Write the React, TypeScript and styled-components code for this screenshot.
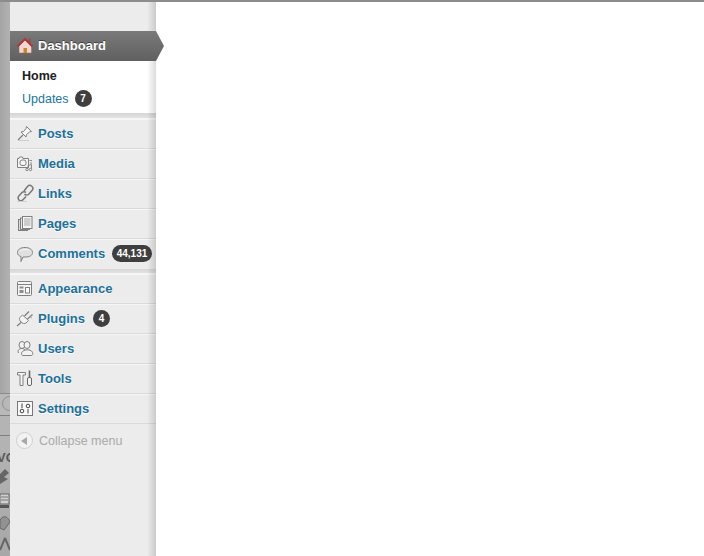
import React from "react";
import styled, { createGlobalStyle } from "styled-components";

const GlobalStyle = createGlobalStyle`
  html, body {
    margin: 0;
    padding: 0;
    background: #fff;
  }
  body {
    font-family: "Liberation Sans", Arial, sans-serif;
  }
`;

const Page = styled.div`
  width: 704px;
  height: 556px;
  display: flex;
  overflow: hidden;
  background: #fff;
  border-top: 2px solid #8c8c8c;
  box-sizing: border-box;
`;

//  the window behind, only a sliver of it shows
const BackStrip = styled.div`
  width: 10px;
  flex-shrink: 0;
  display: flex;
  flex-direction: column;
  background: linear-gradient(to right, #a4a4a4, #b2b2b2);
  overflow: hidden;
`;

const BackTop = styled.div`
  height: 391px;
`;

const BackField = styled.div`
  height: 22px;
  flex-shrink: 0;
  background: #b8b8b8;
  border-top: 1px solid #8a8a8a;
  box-sizing: border-box;
  display: flex;
  align-items: flex-start;
`;

const SearchRing = styled.span`
  width: 13px;
  height: 13px;
  margin: 2px 0 0 2px;
  flex-shrink: 0;
  border: 1px solid #8e8e8e;
  border-radius: 50%;
`;

const BackDivider = styled.div`
  height: 21px;
  flex-shrink: 0;
  background: #b4b4b4;
  border-top: 1px solid #808080;
  border-bottom: 1px solid #808080;
  box-sizing: border-box;
`;

const BackDark = styled.div`
  flex: 1;
  background: linear-gradient(to bottom, #b4b4b4, #a8a8a8);
  display: flex;
  flex-direction: column;
  padding-top: 14px;
  color: #5a5a5a;
  overflow: hidden;
`;

const BackLabel = styled.span`
  font-size: 13px;
  font-weight: bold;
  line-height: 16px;
  white-space: nowrap;
  margin-left: -3px;
`;

const Sidebar = styled.nav`
  width: 146px;
  flex-shrink: 0;
  display: flex;
  flex-direction: column;
  background: #ececec;
  padding-top: 29px;
  box-sizing: border-box;
`;

const SideShadow = styled.div`
  width: 9px;
  flex-shrink: 0;
  margin-left: -9px;
  background: linear-gradient(to right, rgba(0, 0, 0, 0), rgba(0, 0, 0, 0.14));
  z-index: 1;
  pointer-events: none;
`;

const Current = styled.div`
  height: 30px;
  background: linear-gradient(to bottom, #7a7a7a, #606060);
  display: flex;
  align-items: center;
  position: relative;
  z-index: 2;
  padding: 0 0 2px 6px;
  box-sizing: border-box;
  gap: 4px;
  &::after {
    content: "";
    position: absolute;
    left: 146px;
    top: 0;
    width: 8px;
    height: 30px;
    background: linear-gradient(to bottom, #7a7a7a, #606060);
    clip-path: polygon(0 0, 100% 50%, 0 100%);
  }
`;

const CurrentLabel = styled.span`
  color: #fff;
  font-size: 13px;
  font-weight: bold;
  text-shadow: 0 -1px 0 rgba(0, 0, 0, 0.45);
`;

const Submenu = styled.ul`
  list-style: none;
  margin: 0;
  padding: 3px 0 0 12px;
  height: 52px;
  box-sizing: border-box;
  background: #fff;
  display: flex;
  flex-direction: column;
`;

const SubItem = styled.li<{ $active?: boolean }>`
  height: 23px;
  display: flex;
  align-items: center;
  gap: 6px;
  font-size: 12.5px;
  font-weight: ${(p) => (p.$active ? "bold" : "normal")};
  color: ${(p) => (p.$active ? "#222" : "#21759b")};
`;

const Separator = styled.div<{ $h: number }>`
  height: ${(p) => p.$h}px;
  box-sizing: border-box;
  background: linear-gradient(to bottom, #d6d6d6, #e2e2e2);
  border-bottom: 1px solid #f6f6f6;
`;

const Row = styled.div<{ $last?: boolean }>`
  height: 30px;
  box-sizing: border-box;
  display: flex;
  align-items: center;
  padding: 0 0 2px 6px;
  gap: 4px;
  border-top: 1px solid #f6f6f6;
  border-bottom: ${(p) => (p.$last ? "none" : "1px solid #dadada")};
`;

const IconBox = styled.svg`
  width: 18px;
  height: 20px;
  flex-shrink: 0;
  fill: none;
  stroke: #808080;
  stroke-width: 1;
`;

const RowLabel = styled.span`
  color: #21709a;
  font-size: 13px;
  font-weight: bold;
  text-shadow: 0 1px 0 #fff;
`;

const Badge = styled.span<{ $wide?: boolean }>`
  min-width: 17px;
  height: 17px;
  box-sizing: border-box;
  padding: 0 ${(p) => (p.$wide ? "4.5px" : "0")};
  margin-left: ${(p) => (p.$wide ? "3px" : "4px")};
  border-radius: 9px;
  background: #3f3f3f;
  color: #fff;
  font-size: 10px;
  font-weight: bold;
  display: inline-flex;
  align-items: center;
  justify-content: center;
`;

const SubBadge = styled(Badge)`
  margin-left: 0;
`;

const Collapse = styled.div`
  display: flex;
  align-items: center;
  gap: 6px;
  padding: 8px 0 0 6px;
  color: #aaa;
  font-size: 12.5px;
`;

const CollapseButton = styled.span`
  width: 17px;
  height: 17px;
  border-radius: 50%;
  border: 1px solid #cfcfcf;
  background: #f2f2f2;
  box-sizing: border-box;
  display: flex;
  align-items: center;
  justify-content: center;
`;

const CollapseArrow = styled.span`
  border-style: solid;
  border-width: 4px 6px 4px 0;
  border-color: transparent #a8a8a8 transparent transparent;
  margin-right: 2px;
`;

const Main = styled.main`
  flex: 1;
  background: #fff;
`;

//  smudges of the desktop icons behind the menu
const BackIcons = () => (
  <svg width="10" height="86" viewBox="0 0 10 86">
    <path d="M0 8 L5 3 L9 7 L4 11 L8 13 L0 18 Z" fill="#666" />
    <rect x="0" y="28" width="9" height="10" fill="#d0d0d0" stroke="#666" />
    <path d="M1 31 H8 M1 34 H8" stroke="#777" />
    <rect x="0" y="39" width="9" height="3" fill="#555" />
    <path d="M0 54 C4 48 8 51 10 56 L4 64 L0 62 Z" fill="#929292" stroke="#666" />
    <path d="M5 72 L0 84 M5 72 L10 84" stroke="#666" strokeWidth="2" />
  </svg>
);

const HomeIcon = () => (
  <svg width="18" height="20" viewBox="0 0 18 20">
    <rect x="12.5" y="3.5" width="2" height="4" fill="#a84444" />
    <path d="M9 5 L15.5 11 V18 H3 V11 Z" fill="#f7d5d5" stroke="#9c6a6a" strokeWidth="0.6" />
    <path d="M1.5 11.5 L9 4 L16.5 11.5" fill="none" stroke="#a63c3c" strokeWidth="2" />
    <rect x="7.5" y="13" width="3.5" height="5" fill="#c08a24" />
  </svg>
);

const icons: Record<string, React.ReactNode> = {
  Posts: (
    <>
      <path d="M10.5 3.5 L15.5 8.5 L13.5 9 L10.5 11.5 L10 14 L5 9 L7.5 8.5 L10 5.5 Z" fill="#f6f6f6" />
      <path d="M7 12 L2 17" strokeWidth="1.2" />
      <path d="M2 17.5 H13" stroke="#cccccc" />
    </>
  ),
  Media: (
    <>
      <path d="M1.5 5.5 H3 L3.5 4 H6.5 L7 5.5 H12.5 V14.5 H1.5 Z" fill="#f6f6f6" />
      <rect x="4" y="7" width="6" height="5.5" rx="2" />
      <path d="M13.5 7.5 H16 M14 10 H16" strokeWidth="0.9" />
      <path d="M12 15 V12.5 L15.5 11.5 V16" strokeWidth="0.9" />
      <circle cx="11" cy="16.5" r="1.2" fill="#f6f6f6" />
      <circle cx="14.5" cy="16.5" r="1.2" fill="#f6f6f6" />
    </>
  ),
  Links: (
    <>
      <path d="M8 8 L11.5 3.5 A2.8 2.8 0 0 1 16 7.5 L12.5 11.5 A2.8 2.8 0 0 1 8.5 11" stroke="#777" strokeWidth="1.5" />
      <path d="M10 9.5 A2.8 2.8 0 0 0 6 9.5 L2.8 13 A2.8 2.8 0 0 0 7 16.8 L10 13.5" stroke="#777" strokeWidth="1.5" />
      <path d="M1 18.5 H11" stroke="#d0d0d0" />
    </>
  ),
  Pages: (
    <>
      <rect x="2.5" y="6.5" width="9" height="11" fill="#d8d8d8" />
      <rect x="4.5" y="5" width="9" height="11.5" fill="#e8e8e8" />
      <rect x="6.5" y="3.5" width="9.5" height="12" fill="#f6f6f6" />
      <path d="M8 6 H14.5 M8 8 H14.5 M8 10 H14.5 M8 12 H14.5" stroke="#a4a4a4" />
    </>
  ),
  Comments: (
    <>
      <path d="M9 3.5 C13.5 3.5 16.5 5.5 16.5 8.5 C16.5 11.5 13.5 13 9.5 13 L7 13 L5 17.5 L5 12.5 C3 12 1.5 10.5 1.5 8.5 C1.5 5.5 4.5 3.5 9 3.5 Z" fill="#e0e0e0" />
      <path d="M4 7 C5.5 5.5 10 5 13 6" stroke="#f8f8f8" />
    </>
  ),
  Appearance: (
    <>
      <rect x="1.5" y="3.5" width="14" height="14" rx="1" fill="#f4f4f4" />
      <path d="M1.5 6.5 H15.5" />
      <rect x="3.5" y="8.5" width="4" height="2" fill="#8c8c8c" stroke="none" />
      <rect x="3.5" y="12" width="4" height="3" fill="#8c8c8c" stroke="none" />
      <rect x="9.5" y="9.5" width="4" height="5.5" fill="#fff" />
    </>
  ),
  Plugins: (
    <>
      <path d="M6.5 7 L12.5 12.5 L10 15 C8.5 16 6.5 15.5 5 14 C3.5 12.5 3 10.5 4 9.5 Z" fill="#f4f4f4" />
      <path d="M8.5 8 L13 3.5 M11.5 11 L16.5 6.5" strokeWidth="1.3" />
      <path d="M5 14.5 L1 18" strokeWidth="1.3" />
      <path d="M14 9 L16 10" stroke="#b0b0b0" />
    </>
  ),
  Users: (
    <>
      <ellipse cx="6" cy="7" rx="3" ry="3.5" fill="#f2f2f2" />
      <ellipse cx="11" cy="7" rx="3" ry="3.5" fill="#f2f2f2" />
      <path d="M2.5 15 C1 12 3.5 10.5 6 10.5 C7.5 10.5 8.5 11 9 12" fill="#f2f2f2" />
      <path d="M6.5 17.5 C5 17 5 13.5 8 12.5 C10 11.5 14 11.5 15.5 13 C17.5 15 17 17.5 15 17.5 Z" fill="#f2f2f2" />
    </>
  ),
  Tools: (
    <>
      <path d="M1.5 4.5 H9.5 V7 H7 V17.5 H4 V7 H1.5 Z" fill="#f4f4f4" />
      <path d="M13.5 2.5 V9" stroke="#666" strokeWidth="1.6" />
      <rect x="11.5" y="9.5" width="4" height="8" rx="1.5" fill="#f4f4f4" stroke="#666" />
    </>
  ),
  Settings: (
    <>
      <rect x="1.5" y="3.5" width="15" height="14" fill="#f8f8f8" stroke="#777" />
      <path d="M6 5.5 V10 M12 11 V15.5" stroke="#444" />
      <circle cx="6" cy="13" r="1.8" stroke="#444" />
      <circle cx="12" cy="8" r="1.8" stroke="#444" />
    </>
  ),
};

type Item = { label: string; badge?: string; wide?: boolean; last?: boolean };

const topItems: Item[] = [
  { label: "Posts" },
  { label: "Media" },
  { label: "Links" },
  { label: "Pages" },
  { label: "Comments", badge: "44,131", wide: true, last: true },
];

const bottomItems: Item[] = [
  { label: "Appearance" },
  { label: "Plugins", badge: "4" },
  { label: "Users" },
  { label: "Tools" },
  { label: "Settings" },
];

const MenuRow = ({ item }: { item: Item }) => (
  <Row $last={item.last}>
    <IconBox viewBox="0 0 18 20">{icons[item.label]}</IconBox>
    <RowLabel>{item.label}</RowLabel>
    {item.badge && <Badge $wide={item.wide}>{item.badge}</Badge>}
  </Row>
);

const App = () => {
  return (
    <>
      <GlobalStyle />
      <Page>
        <BackStrip>
          <BackTop />
          <BackField>
            <SearchRing />
          </BackField>
          <BackDivider />
          <BackDark>
            <BackLabel>VO</BackLabel>
            <BackIcons />
          </BackDark>
        </BackStrip>
        <Sidebar>
          <Current>
            <HomeIcon />
            <CurrentLabel>Dashboard</CurrentLabel>
          </Current>
          <Submenu>
            <SubItem $active>Home</SubItem>
            <SubItem>
              Updates <SubBadge>7</SubBadge>
            </SubItem>
          </Submenu>
          <Separator $h={6} />
          {topItems.map((item) => (
            <MenuRow key={item.label} item={item} />
          ))}
          <Separator $h={5} />
          {bottomItems.map((item) => (
            <MenuRow key={item.label} item={item} />
          ))}
          <Collapse>
            <CollapseButton>
              <CollapseArrow />
            </CollapseButton>
            Collapse menu
          </Collapse>
        </Sidebar>
        <SideShadow />
        <Main />
      </Page>
    </>
  );
};

export default App;
